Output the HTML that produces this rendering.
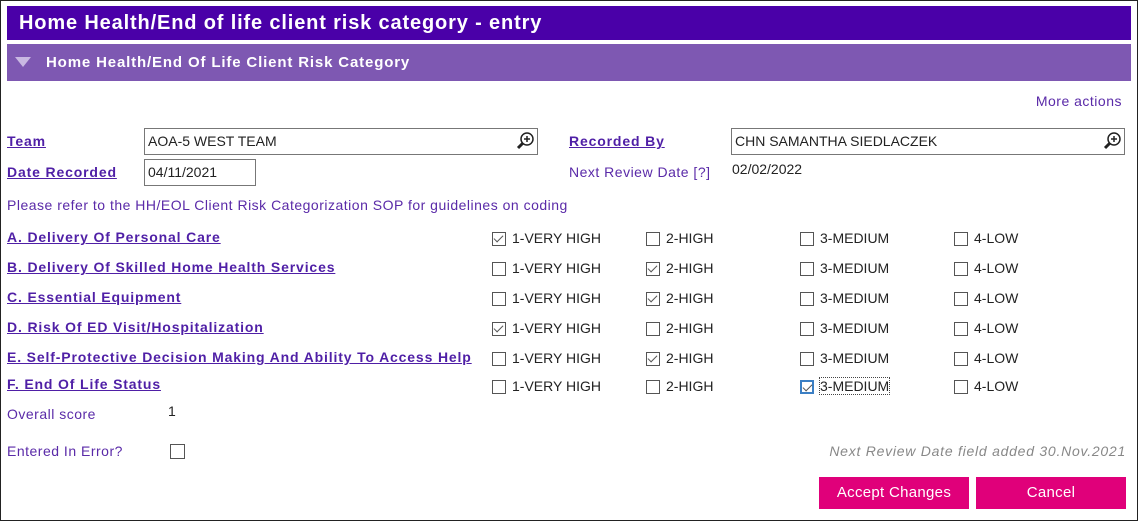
<!DOCTYPE html>
<html><head><style>
body{margin:0;width:1138px;height:521px;position:relative;font-family:"Liberation Sans",Tahoma,sans-serif;font-size:14px;color:#222;background:#fff;overflow:hidden}
.a{position:absolute;white-space:nowrap}
.frame{position:absolute;left:0;top:0;width:1136px;height:519px;border:1px solid #222}
.t{left:7px;top:6px;width:1124px;height:34px;background:#4a00a8;color:#fff;font-weight:bold;font-size:20px;line-height:34px;text-indent:12px;letter-spacing:0.85px}
.s{left:7px;top:44px;width:1124px;height:37px;background:#7e58b2;color:#fff;font-weight:bold;font-size:15px;line-height:37px;text-indent:39px;letter-spacing:0.85px}
.lab{color:#4f1fa6;font-weight:bold;text-decoration:underline;font-size:14px;letter-spacing:0.85px}
.pl{color:#5a2aa8;font-size:14px;letter-spacing:0.5px}
.inp{position:absolute;border:1px solid #777;height:24px;box-sizing:border-box;line-height:22px;padding-left:3px;font-size:14px}
.cb{position:absolute;width:14px;height:14px;border:1px solid #555;box-sizing:border-box;background:#fff}
.ck::after{content:"";position:absolute;left:3px;top:0px;width:4px;height:8px;border:solid #555;border-width:0 1.5px 1.5px 0;transform:rotate(45deg)}
.ol{position:absolute;font-size:14px}
.btn{position:absolute;top:477px;height:32px;background:#e0007a;color:#fff;text-align:center;line-height:32px;font-size:15px;letter-spacing:0.3px}
</style></head><body>
<div class="frame"></div>
<div class="a t">Home Health/End of life client risk category - entry</div>
<div class="a s">Home Health/End Of Life Client Risk Category</div>
<svg class="a" style="left:15px;top:57px" width="16" height="11"><polygon points="0,0 16,0 8,10" fill="#c9b8e2"/></svg>
<div class="a pl" style="right:16px;top:93px">More actions</div>
<div class="a lab" style="left:7px;top:133px">Team</div>
<div class="inp" style="left:144px;top:128px;width:394px;height:27px;line-height:25px">AOA-5 WEST TEAM</div>
<svg class="a" style="left:515px;top:131px" width="20" height="20"><circle cx="12" cy="8" r="6" fill="none" stroke="#222" stroke-width="1.5"/><path d="M12 5v6M9 8h6" stroke="#222" stroke-width="1.5"/><path d="M7.5 12.5L3 17" stroke="#222" stroke-width="3"/></svg>
<div class="a lab" style="left:569px;top:133px">Recorded By</div>
<div class="inp" style="left:731px;top:128px;width:394px;height:27px;line-height:25px">CHN SAMANTHA SIEDLACZEK</div>
<svg class="a" style="left:1102px;top:131px" width="20" height="20"><circle cx="12" cy="8" r="6" fill="none" stroke="#222" stroke-width="1.5"/><path d="M12 5v6M9 8h6" stroke="#222" stroke-width="1.5"/><path d="M7.5 12.5L3 17" stroke="#222" stroke-width="3"/></svg>
<div class="a lab" style="left:7px;top:164px">Date Recorded</div>
<div class="inp" style="left:144px;top:159px;width:112px;height:27px;line-height:25px">04/11/2021</div>
<div class="a pl" style="left:569px;top:164px">Next Review Date [?]</div>
<div class="a" style="left:732px;top:161px">02/02/2022</div>
<div class="a pl" style="left:7px;top:197px">Please refer to the HH/EOL Client Risk Categorization SOP for guidelines on coding</div>

<div class="a lab" style="left:7px;top:229px">A. Delivery Of Personal Care</div>
<div class="a lab" style="left:7px;top:259px">B. Delivery Of Skilled Home Health Services</div>
<div class="a lab" style="left:7px;top:289px">C. Essential Equipment</div>
<div class="a lab" style="left:7px;top:319px">D. Risk Of ED Visit/Hospitalization</div>
<div class="a lab" style="left:7px;top:349px">E. Self-Protective Decision Making And Ability To Access Help</div>
<div class="a lab" style="left:7px;top:376px">F. End Of Life Status</div>

<div id="g"></div>
<script>
var ys=[232,262,292,322,352,380],xs=[492,646,800,954],ls=["1-VERY HIGH","2-HIGH","3-MEDIUM","4-LOW"],ch=[0,1,1,0,1,2],h="";
for(var r=0;r<6;r++)for(var c=0;c<4;c++){var on=ch[r]==c;var blue=(r==5&&c==2);
h+='<div class="cb'+(on?' ck':'')+'" style="left:'+xs[c]+'px;top:'+ys[r]+'px;'+(blue?'border:2px solid #3b7fc4;':'')+'"></div>';
h+='<div class="ol" style="left:'+(xs[c]+20)+'px;top:'+(ys[r]-2)+'px;'+(blue?'outline:1px dotted #444':'')+'">'+ls[c]+'</div>';}
document.getElementById('g').innerHTML=h;
</script>
<div class="a pl" style="left:7px;top:406px">Overall score</div>
<div class="a" style="left:168px;top:403px">1</div>
<div class="a pl" style="left:7px;top:443px">Entered In Error?</div>
<div class="cb" style="left:170px;top:444px;width:15px;height:15px"></div>
<div class="a" style="right:12px;top:443px;color:#888;font-style:italic;letter-spacing:0.75px">Next Review Date field added 30.Nov.2021</div>
<div class="btn" style="left:819px;width:150px">Accept Changes</div>
<div class="btn" style="left:976px;width:150px">Cancel</div>
</body></html>
